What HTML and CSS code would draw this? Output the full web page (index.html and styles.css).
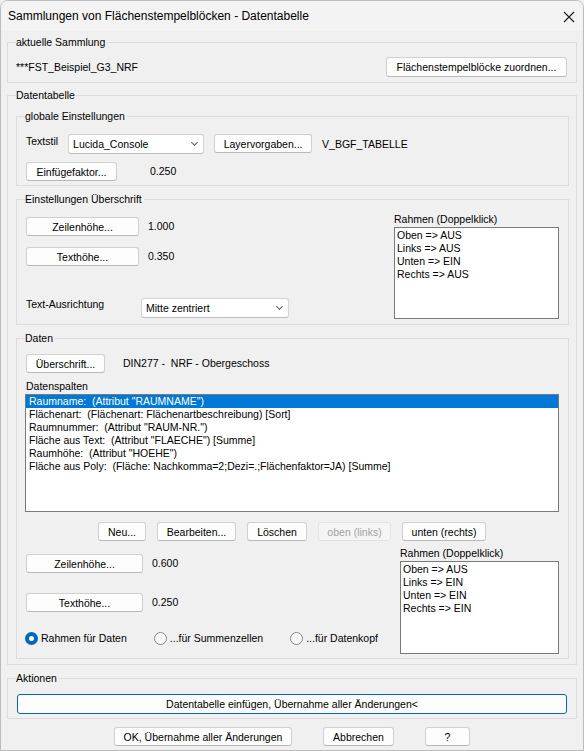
FILE: index.html
```html
<!DOCTYPE html>
<html lang="de">
<head>
    <meta charset="UTF-8">
    <title>Sammlungen von Flächenstempelblöcken - Datentabelle</title>
    <link rel="stylesheet" href="styles.css">
</head>
<body>

<div class="window">
    <div class="titlebar">
        <span class="title">Sammlungen von Flächenstempelblöcken - Datentabelle</span>
        <svg class="close" width="12" height="12" viewBox="0 0 12 12">
            <path d="M1 1 L11 11 M11 1 L1 11" stroke="#1b1b1b" stroke-width="1.1" fill="none"/>
        </svg>
    </div>

    <div class="main">
        <fieldset class="group sammlung">
            <legend>aktuelle Sammlung</legend>
            <div class="row between">
                <span>***FST_Beispiel_G3_NRF</span>
                <button class="btn w-zuordnen">Flächenstempelblöcke zuordnen...</button>
            </div>
        </fieldset>

        <fieldset class="group datentabelle">
            <legend>Datentabelle</legend>

            <fieldset class="group inner globale">
                <legend>globale Einstellungen</legend>
                <div class="row top">
                    <span class="label-textstil">Textstil</span>
                    <div class="combo w-textstil">Lucida_Console<span class="chevron"></span></div>
                    <button class="btn w-layer">Layervorgaben...</button>
                    <span class="value-layer">V_BGF_TABELLE</span>
                </div>
                <div class="row second">
                    <button class="btn w-faktor">Einfügefaktor...</button>
                    <span class="value-faktor">0.250</span>
                </div>
            </fieldset>

            <fieldset class="group inner ueberschrift">
                <legend>Einstellungen Überschrift</legend>
                <div class="split">
                    <div class="left-col">
                        <div class="row">
                            <button class="btn w-hoehe1">Zeilenhöhe...</button>
                            <span class="value">1.000</span>
                        </div>
                        <div class="row gap11">
                            <button class="btn w-hoehe1">Texthöhe...</button>
                            <span class="value">0.350</span>
                        </div>
                        <div class="row top ausrichtung">
                            <span class="label-ausrichtung">Text-Ausrichtung</span>
                            <div class="combo w-ausrichtung">Mitte zentriert<span class="chevron"></span></div>
                        </div>
                    </div>
                    <div class="right-col rahmen1">
                        <div class="list-label">Rahmen (Doppelklick)</div>
                        <div class="listbox rahmen-list1">
                            <div class="item">Oben =&gt; AUS</div>
                            <div class="item">Links =&gt; AUS</div>
                            <div class="item">Unten =&gt; EIN</div>
                            <div class="item">Rechts =&gt; AUS</div>
                        </div>
                    </div>
                </div>
            </fieldset>

            <fieldset class="group inner daten">
                <legend>Daten</legend>
                <div class="row">
                    <button class="btn w-ueberschrift">Überschrift...</button>
                    <span class="value-din">DIN277 -  NRF - Obergeschoss</span>
                </div>
                <div class="list-label spalten-label">Datenspalten</div>
                <div class="listbox spalten">
                    <div class="item selected">Raumname:  (Attribut "RAUMNAME")</div>
                    <div class="item">Flächenart:  (Flächenart: Flächenartbeschreibung) [Sort]</div>
                    <div class="item">Raumnummer:  (Attribut "RAUM-NR.")</div>
                    <div class="item">Fläche aus Text:  (Attribut "FLAECHE") [Summe]</div>
                    <div class="item">Raumhöhe:  (Attribut "HOEHE")</div>
                    <div class="item">Fläche aus Poly:  (Fläche: Nachkomma=2;Dezi=.;Flächenfaktor=JA) [Summe]</div>
                </div>
                <div class="row center-row actions">
                    <button class="btn w-neu">Neu...</button>
                    <button class="btn w-bearbeiten">Bearbeiten...</button>
                    <button class="btn w-loeschen">Löschen</button>
                    <button class="btn w-oben" disabled>oben (links)</button>
                    <button class="btn w-unten">unten (rechts)</button>
                </div>
                <div class="split lower">
                    <div class="left-col daten-left">
                        <div class="row">
                            <button class="btn w-hoehe2">Zeilenhöhe...</button>
                            <span class="value">0.600</span>
                        </div>
                        <div class="row gap20">
                            <button class="btn w-hoehe2">Texthöhe...</button>
                            <span class="value">0.250</span>
                        </div>
                        <div class="radios">
                            <label class="radio"><span class="dot checked"></span>Rahmen für Daten</label>
                            <label class="radio"><span class="dot"></span>...für Summenzellen</label>
                            <label class="radio"><span class="dot"></span>...für Datenkopf</label>
                        </div>
                    </div>
                    <div class="right-col rahmen2">
                        <div class="list-label">Rahmen (Doppelklick)</div>
                        <div class="listbox rahmen-list2">
                            <div class="item">Oben =&gt; AUS</div>
                            <div class="item">Links =&gt; EIN</div>
                            <div class="item">Unten =&gt; EIN</div>
                            <div class="item">Rechts =&gt; EIN</div>
                        </div>
                    </div>
                </div>
            </fieldset>
        </fieldset>

        <fieldset class="group aktionen">
            <legend>Aktionen</legend>
            <button class="btn default wide">Datentabelle einfügen, Übernahme aller Änderungen&lt;</button>
        </fieldset>

        <div class="row center-row footer">
            <button class="btn w-ok">OK, Übernahme aller Änderungen</button>
            <button class="btn w-abbrechen">Abbrechen</button>
            <button class="btn w-hilfe">?</button>
        </div>
    </div>
</div>

</body>
</html>
```

FILE: styles.css
```css
* {
    box-sizing: border-box;
}
body {
    margin: 0;
    background-color: #f0f0f0;
    font-family: "Liberation Sans", Arial, sans-serif;
    font-size: 10.5px;
    line-height: 13px;
    color: #000;
}
.window {
    width: 584px;
    height: 751px;
    border: 1px solid #bcbcbc;
    border-radius: 8px 8px 0 0;
    background-color: #f0f0f0;
    overflow: hidden;
}
.titlebar {
    height: 30px;
    background-color: #f3f3f3;
    display: flex;
    align-items: center;
    justify-content: space-between;
    padding: 1px 8px 0 7px;
}
.title {
    font-size: 12px;
}
.main {
    padding: 5px 6px 0 6px;
}

/* group boxes */
.group {
    margin: 0;
    min-width: 0;
    border: 1px solid #dcdcdc;
    padding: 8px 9px 4px 8px;
}
.group legend {
    padding: 0 2px 0 0;
    line-height: 13px;
}
.sammlung {
    padding-bottom: 5px;
}
.datentabelle {
    margin-top: 6px;
    padding: 8px 7px 5px 8px;
}
.inner + .inner {
    margin-top: 7px;
}
.globale {
    padding-top: 11px;
    padding-bottom: 4px;
}
.ueberschrift {
    padding-top: 7px;
    padding-bottom: 5px;
}
.daten {
    padding-top: 9px;
    padding-bottom: 4px;
}
.aktionen {
    margin-top: 7px;
    padding: 9px 9px 4px 9px;
}
.aktionen legend {
    margin-left: -1px;
}

/* rows */
.row {
    display: flex;
    align-items: center;
}
.row.between {
    justify-content: space-between;
}
.row.top {
    align-items: flex-start;
}
.row.second {
    margin-top: 8px;
}
.center-row {
    justify-content: center;
}
.gap11 {
    margin-top: 11px;
}
.gap20 {
    margin-top: 20px;
}

/* buttons */
.btn {
    height: 19px;
    padding: 0 4px;
    font-family: inherit;
    font-size: 10.5px;
    color: #000;
    background-color: #fdfdfd;
    border: 1px solid #d0d0d0;
    border-bottom-color: #b8b8b8;
    border-radius: 3px;
    white-space: nowrap;
}
.btn:disabled {
    color: #a3a3a3;
    background-color: #f5f5f5;
    border-color: #e3e3e3;
}
.btn.default {
    border-color: #0067c0;
}
.btn.wide {
    width: 100%;
    height: 20px;
}
.w-zuordnen { width: 181px; height: 20px; }
.w-layer { width: 98px; margin-left: 10px; }
.w-faktor { width: 91px; margin-left: 1px; }
.w-hoehe1 { width: 113px; margin-left: 1px; }
.w-hoehe2 { width: 117px; margin-left: 1px; }
.w-ueberschrift { width: 79px; margin-left: 1px; }
.w-neu { width: 48px; }
.w-bearbeiten { width: 79px; }
.w-loeschen { width: 60px; }
.w-oben { width: 73px; }
.w-unten { width: 84px; }
.w-ok { width: 178px; }
.w-abbrechen { width: 71px; }
.w-hilfe { width: 45px; }

.actions {
    margin-top: 10px;
    gap: 11px;
}
.footer {
    margin-top: 8px;
    gap: 31px;
}

/* combo boxes */
.combo {
    position: relative;
    height: 20px;
    padding: 3px 0 0 4px;
    background-color: #fff;
    border: 1px solid #d4d4d4;
    border-bottom-color: #bdbdbd;
    border-radius: 3px;
}
.chevron {
    position: absolute;
    right: 6px;
    top: 5px;
    width: 5px;
    height: 5px;
    border-right: 1px solid #606060;
    border-bottom: 1px solid #606060;
    transform: rotate(45deg);
}
.w-textstil {
    width: 136px;
    margin-left: 10px;
}
.w-ausrichtung {
    width: 148px;
}

/* labels and values */
.label-textstil {
    margin-left: 1px;
    margin-top: 1px;
}
.value-layer {
    margin-left: 10px;
    margin-top: 4px;
}
.value-faktor {
    margin-left: 33px;
}
.value {
    margin-left: 9px;
}
.value-din {
    margin-left: 18px;
    white-space: pre;
}
.label-ausrichtung {
    width: 115px;
    margin-left: 1px;
}
.ausrichtung {
    margin-top: 32px;
}

/* layout with a list on the right */
.split {
    display: flex;
    justify-content: space-between;
}
.ueberschrift .left-col {
    margin-top: 4px;
}
.rahmen1 {
    width: 165px;
}
.rahmen2 {
    width: 159px;
}
.lower {
    margin-top: 6px;
}
.daten-left {
    margin-top: 7px;
}
.list-label {
    line-height: 13px;
}
.spalten-label {
    margin-top: 7px;
    margin-left: 1px;
}

/* list boxes */
.listbox {
    margin-top: 1px;
    background-color: #fff;
    border: 1px solid #7a7a7a;
    padding: 0;
}
.listbox .item {
    height: 13px;
    padding-left: 2px;
    white-space: pre;
}
.listbox .item.selected {
    background-color: #0078d7;
    color: #fff;
}
.rahmen-list1 {
    height: 92px;
    padding-top: 1px;
}
.rahmen-list2 {
    height: 93px;
    padding-top: 1px;
}
.spalten {
    height: 118px;
}
.spalten .item {
    padding-left: 3px;
}

/* radio buttons */
.radios {
    display: flex;
    gap: 27px;
    margin-top: 20px;
}
.radio {
    display: flex;
    align-items: center;
    gap: 3px;
    height: 13px;
}
.dot {
    width: 13px;
    height: 13px;
    border-radius: 50%;
    border: 1px solid #8a8a8a;
    background-color: #f8f8f8;
}
.dot.checked {
    border: 4px solid #0067c0;
    background-color: #fff;
}
```
